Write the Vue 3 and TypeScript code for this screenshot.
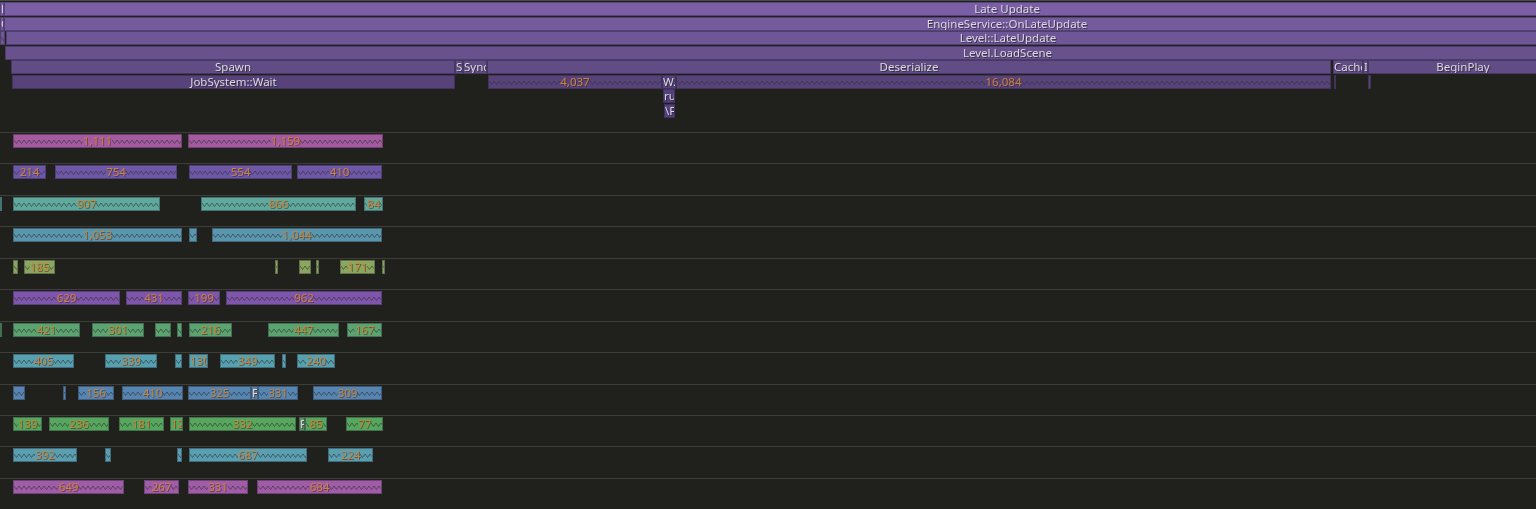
<script setup lang="ts">
type Zone = { from: number; to: number; label?: string; fold?: boolean; color?: string };

type Lane = { color: string; zones: Zone[] };

// [from, to, label]; every thread zone is a folded group unless it says otherwise
function z(from: number, to: number, label?: string): Zone {
  return { from, to, label, fold: true };
}

function named(from: number, to: number, label?: string): Zone {
  return { from, to, label };
}

const flame: Lane[] = [
  { color: "#7b5fa6", zones: [named(0, 4, "L"), named(4, 2010, "Late Update")] },
  { color: "#755a9e", zones: [named(0, 4, "C"), named(4, 2010, "EngineService::OnLateUpdate")] },
  { color: "#6f5696", zones: [z(0, 5), named(6, 2010, "Level::LateUpdate")] },
  { color: "#69518e", zones: [named(5, 2010, "Level.LoadScene")] },
  {
    color: "#624c85",
    zones: [
      named(11, 455, "Spawn"),
      named(455, 463, "S"),
      named(463, 487, "Sync"),
      named(487, 1331, "Deserialize"),
      named(1333, 1363, "CacheData"),
      named(1363, 1368, "I"),
      named(1368, 1558, "BeginPlay"),
    ],
  },
  {
    color: "#57437a",
    zones: [
      named(12, 455, "JobSystem::Wait"),
      z(488, 662, "4,037"),
      named(662, 676, "W."),
      z(676, 1331, "16,084"),
      named(1334, 1336),
      named(1368, 1371),
    ],
  },
  { color: "#55417a", zones: [named(663, 675, "ru")] },
  { color: "#553f7c", zones: [named(664, 675, "\\F")] },
];

const lanes: Lane[] = [
  { color: "#a45a9e", zones: [z(13, 182, "1,111"), z(188, 383, "1,159")] },
  { color: "#6f57a8", zones: [z(13, 46, "214"), z(55, 177, "754"), z(189, 292, "554"), z(297, 382, "410")] },
  { color: "#5fa99c", zones: [z(0, 2), z(13, 160, "907"), z(201, 356, "866"), z(364, 383, "84")] },
  { color: "#5a97ad", zones: [z(13, 182, "1,053"), z(189, 197), z(212, 382, "1,044")] },
  {
    color: "#8ba65e",
    zones: [z(13, 18), z(24, 55, "185"), z(275, 278), z(299, 311), z(316, 319), z(340, 375, "171"), z(382, 385)],
  },
  { color: "#7f56ab", zones: [z(13, 120, "629"), z(126, 182, "431"), z(188, 220, "199"), z(226, 382, "962")] },
  {
    color: "#5ba46f",
    zones: [
      z(0, 2),
      z(13, 80, "421"),
      z(92, 144, "301"),
      z(155, 171),
      z(177, 182),
      z(189, 232, "216"),
      z(268, 339, "447"),
      z(347, 382, "167"),
    ],
  },
  {
    color: "#57a0b0",
    zones: [
      z(13, 74, "405"),
      z(105, 157, "339"),
      z(175, 182),
      z(189, 208, "130"),
      z(220, 275, "349"),
      z(282, 286),
      z(297, 335, "240"),
    ],
  },
  {
    color: "#5585b0",
    zones: [
      z(13, 25),
      z(63, 66),
      z(78, 114, "156"),
      z(122, 183, "410"),
      z(188, 251, "325"),
      { from: 251, to: 258, label: "F", color: "#5f7f9c" },
      z(258, 298, "331"),
      z(313, 382, "309"),
    ],
  },
  {
    color: "#57a65e",
    zones: [
      z(13, 42, "139"),
      z(49, 109, "236"),
      z(119, 164, "181"),
      z(170, 183, "12"),
      z(189, 296, "332"),
      { from: 299, to: 305, label: "F", color: "#5f8f66" },
      z(305, 327, "85"),
      z(346, 383, "77"),
    ],
  },
  { color: "#5a9fb0", zones: [z(13, 77, "392"), z(105, 111), z(177, 182), z(189, 307, "687"), z(328, 373, "224")] },
  { color: "#a05ca6", zones: [z(13, 124, "649"), z(144, 179, "267"), z(188, 248, "331"), z(257, 382, "684")] },
];

function zoneStyle(lane: Lane, zone: Zone) {
  return {
    left: `${zone.from}px`,
    width: `${zone.to - zone.from}px`,
    backgroundColor: zone.color ?? lane.color,
  };
}
</script>

<template>
  <div class="timeline">
    <svg class="defs" width="0" height="0" aria-hidden="true">
      <defs>
        <pattern id="squiggle" width="10" height="14" patternUnits="userSpaceOnUse">
          <path d="M0 5 L2.5 8.5 L5 5 L7.5 8.5 L10 5" transform="scale(1 1)" fill="none" stroke="#2f3038" stroke-opacity="0.62" stroke-width="1" />
        </pattern>
      </defs>
    </svg>

    <div class="flame">
      <div v-for="(lane, i) in flame" :key="i" class="lane">
        <div
          v-for="zone in lane.zones"
          :key="zone.from"
          :class="['zone', { '--fold': zone.fold }]"
          :style="zoneStyle(lane, zone)"
        >
          <svg v-if="zone.fold" class="wave"><rect width="100%" height="100%" fill="url(#squiggle)" /></svg>
          <span v-if="zone.label" class="label">{{ zone.label }}</span>
          <svg v-if="zone.fold && zone.label" class="wave"><rect width="100%" height="100%" fill="url(#squiggle)" /></svg>
        </div>
      </div>
    </div>

    <div class="threads">
      <div v-for="(lane, i) in lanes" :key="i" class="thread">
        <div class="lane">
          <div
            v-for="zone in lane.zones"
            :key="zone.from"
            :class="['zone', { '--fold': zone.fold }]"
            :style="zoneStyle(lane, zone)"
          >
            <svg v-if="zone.fold" class="wave"><rect width="100%" height="100%" fill="url(#squiggle)" /></svg>
            <span v-if="zone.label" class="label">{{ zone.label }}</span>
            <svg v-if="zone.fold && zone.label" class="wave"><rect width="100%" height="100%" fill="url(#squiggle)" /></svg>
          </div>
        </div>
      </div>
    </div>
  </div>
</template>

<style scoped>
.timeline {
  width: 1536px;
  height: 509px;
  overflow: hidden;
  background: #20211c;
  border-top: 1px solid #4a4a4a;
  box-sizing: border-box;
  padding-top: 1px;
  font-family: "Noto Sans", sans-serif;
  font-size: 11.5px;
  filter: blur(0.35px);
}

.defs {
  position: absolute;
}

.flame {
  display: flex;
  flex-direction: column;
  gap: 0.5px;
}

.lane {
  position: relative;
  height: 14px;
}

.threads {
  margin-top: 14.5px;
}

.thread {
  height: 31.45px;
  box-sizing: border-box;
  border-top: 1px solid #3d3e3a;
  padding-top: 1px;
}

.zone {
  position: absolute;
  top: 0;
  height: 14px;
  box-sizing: border-box;
  display: flex;
  align-items: center;
  justify-content: safe center;
  overflow: hidden;
  border: 1px solid rgba(30, 25, 45, 0.38);
  border-left-width: 1px;
}

.wave {
  flex: 1 1 0;
  min-width: 0;
  height: 12px;
}

.label {
  flex: none;
  line-height: 12px;
  color: #dcd9e2;
  text-shadow: 1px 1px 0 rgba(20, 20, 20, 0.55);
  white-space: nowrap;
}

.--fold .label {
  color: #cc8238;
  text-shadow: 1px 1px 0 rgba(40, 30, 30, 0.5);
}
</style>
